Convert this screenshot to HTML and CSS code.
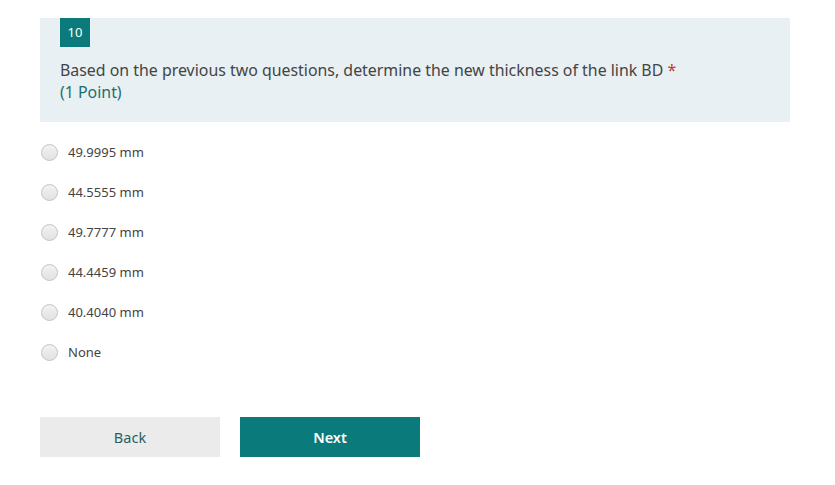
FILE: index.html
```html
<!DOCTYPE html>
<html>
<head>
	<meta charset="utf-8" />
	<title>Question 10</title>
	<link rel="stylesheet" href="styles.css">
</head>
<body>
	<div class="page">
		<div class="question">
			<div class="num">10</div>
			<div class="title">Based on the previous two questions, determine the new thickness of the link BD <span class="req">*</span></div>
			<div class="point">(1 Point)</div>
		</div>
		<ul class="options">
			<li><span class="radio"></span>49.9995 mm</li>
			<li><span class="radio"></span>44.5555 mm</li>
			<li><span class="radio"></span>49.7777 mm</li>
			<li><span class="radio"></span>44.4459 mm</li>
			<li><span class="radio"></span>40.4040 mm</li>
			<li><span class="radio"></span>None</li>
		</ul>
		<div class="buttons">
			<button class="btn back">Back</button>
			<button class="btn next">Next</button>
		</div>
	</div>
</body>
</html>
```
FILE: styles.css
```css
*{
	padding: 0px;
	margin: 0px;
	box-sizing: border-box;
}
body{
	background: #fff;
	font-family: "Noto Sans", "Open Sans", sans-serif;
	color: #333;
}
.page{
	width: 750px;
	margin: 18px 0 0 40px;
}
.question{
	background: #e8f0f3;
	padding: 0 20px 18px 20px;
	height: 104px;
}
.num{
	display: inline-block;
	width: 30px;
	height: 29px;
	line-height: 29px;
	text-align: center;
	background: #0b7a7b;
	color: #fff;
	font-size: 13px;
}
.title{
	margin-top: 12px;
	font-size: 15.9px;
	line-height: 22px;
	color: #444;
}
.req{
	color: #c0392b;
}
.point{
	font-size: 15.9px;
	line-height: 22px;
	color: #1e6e6f;
}
.options{
	list-style: none;
	margin-top: 20px;
}
.options li{
	display: flex;
	align-items: center;
	height: 20px;
	margin-bottom: 20px;
	font-size: 13px;
	color: #444;
}
.radio{
	width: 17px;
	height: 17px;
	border-radius: 50%;
	border: 1px solid #c4c4c4;
	background: linear-gradient(#f2f2f2, #e2e2e2);
	margin: 0 10px 0 1px;
}
.buttons{
	display: flex;
	gap: 20px;
	margin-top: 55px;
}
.btn{
	width: 180px;
	height: 40px;
	border: none;
	font-family: "Noto Sans", "Open Sans", sans-serif;
	font-size: 14.5px;
}
.back{
	background: #eaebea;
	color: #2b5f5f;
}
.next{
	background: #0b7a7b;
	color: #fff;
	font-weight: 600;
}
```
